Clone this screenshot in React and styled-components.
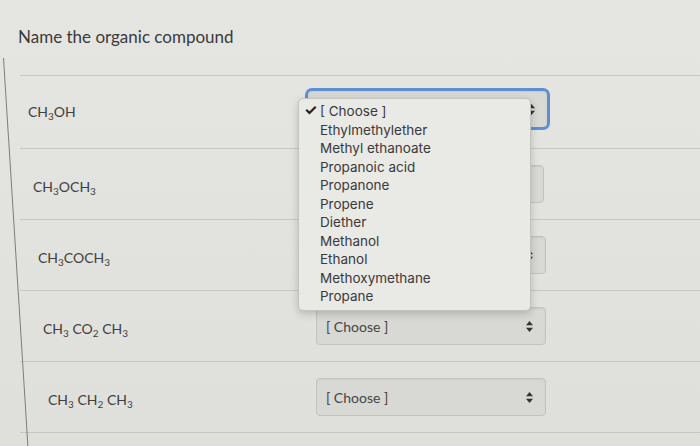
import styled, { createGlobalStyle } from 'styled-components';

const GlobalStyle = createGlobalStyle`
  body {
    margin: 0;
    background: #e1e1de;
    font-family: Lato, "Open Sans", sans-serif;
    color: #3b3b3b;
  }
`;

const options = [
  "Ethylmethylether",
  "Methyl ethanoate",
  "Propanoic acid",
  "Propanone",
  "Propene",
  "Diether",
  "Methanol",
  "Ethanol",
  "Methoxymethane",
  "Propane",
];

const rows = [
  { parts: ["CH", "3", "OH"], indent: 8 },
  { parts: ["CH", "3", "OCH", "3"], indent: 13 },
  { parts: ["CH", "3", "COCH", "3"], indent: 18 },
  { parts: ["CH", "3", " CO", "2", " CH", "3"], indent: 23 },
  { parts: ["CH", "3", " CH", "2", " CH", "3"], indent: 28 },
];

function Arrows() {
  return (
    <svg width="7" height="11" viewBox="0 0 7 11">
      <path d="M3.5 0 L7 4.2 L0 4.2 Z" fill="#333" />
      <path d="M3.5 11 L7 6.8 L0 6.8 Z" fill="#333" />
    </svg>
  );
}

function Formula({ parts }) {
  return (
    <Label>
      {parts.map((p, i) => (i % 2 === 1 ? <sub key={i}>{p}</sub> : <span key={i}>{p}</span>))}
    </Label>
  );
}

function App() {
  return (
    <Page>
      <GlobalStyle />
      <Title>Name the organic compound</Title>
      <List>
        {rows.map((r, i) => (
          <Row key={i} $first={i === 0}>
            <LabelCell $indent={r.indent}>
              <Formula parts={r.parts} />
            </LabelCell>
            <SelectCell>
              <SelectBox $focused={i === 0} $shift={i}>
                <span>{i === 0 ? "" : "[ Choose ]"}</span>
                <Arrows />
              </SelectBox>
              {i === 0 && (
                <Menu>
                  <MenuItem $checked>[ Choose ]</MenuItem>
                  {options.map((o) => (
                    <MenuItem key={o}>{o}</MenuItem>
                  ))}
                </Menu>
              )}
            </SelectCell>
          </Row>
        ))}
      </List>
    </Page>
  );
}

const Page = styled.div`
  position: relative;
  height: 446px;
  overflow: hidden;
  padding: 27px 0 0 18px;
  box-sizing: border-box;
  background: linear-gradient(180deg, #e5e5e2 0%, #dfdfdc 100%);

  &::before {
    content: "";
    position: absolute;
    left: 3px;
    top: 58px;
    height: 388px;
    border-left: 1px solid #7d7d7a;
    transform-origin: top left;
    transform: skewX(3.6deg);
  }
`;

const Title = styled.h1`
  margin: 0 0 28px;
  font-size: 17px;
  font-weight: 400;
  line-height: 20px;
  color: #3a3a3a;
`;

const List = styled.div`
  margin-left: 2px;
`;

const Row = styled.div`
  display: grid;
  grid-template-columns: 288px 242px;
  align-items: center;
  padding: ${(p) => (p.$first ? "12px 0 18px" : "16px 0")};
  border-top: 1px solid #c6c6c2;
  &:last-child {
    border-bottom: 1px solid #c6c6c2;
  }
`;

const LabelCell = styled.div`
  padding-left: ${(p) => p.$indent}px;
  padding-top: 5px;
`;

const Label = styled.span`
  font-size: 14px;
  color: #404040;
  sub {
    font-size: 10px;
    vertical-align: -3px;
  }
`;

const SelectCell = styled.div`
  position: relative;
`;

const SelectBox = styled.div`
  box-sizing: border-box;
  height: ${(p) => (p.$focused ? 42 : 38)}px;
  margin-left: ${(p) => (p.$focused ? -3 : Math.min(p.$shift * 2 + 4, 8))}px;
  width: ${(p) => (p.$focused ? 245 : 230)}px;
  display: flex;
  align-items: center;
  justify-content: space-between;
  padding: 0 12px 0 9px;
  background: #d8d8d4;
  border: ${(p) => (p.$focused ? "3px solid #5f8fd3" : "1px solid #c3c3bf")};
  border-radius: ${(p) => (p.$focused ? 7 : 4)}px;
  box-shadow: inset 0 1px 2px rgba(0, 0, 0, 0.06);
  font-size: 14px;
  color: #454545;
`;

const Menu = styled.div`
  position: absolute;
  left: -10px;
  top: 10px;
  width: 233px;
  box-sizing: border-box;
  padding: 3px 0 4px;
  background: #e9e9e6;
  border: 1px solid #c2c2be;
  border-radius: 5px;
  box-shadow: 0 3px 8px rgba(0, 0, 0, 0.18);
  font-family: Inter, "Liberation Sans", sans-serif;
  z-index: 2;
`;

const MenuItem = styled.div`
  position: relative;
  padding-left: 21px;
  font-size: 13.5px;
  line-height: 18.5px;
  color: #3a3a3a;
  &::before {
    content: ${(p) => (p.$checked ? '"✓"' : "none")};
    position: absolute;
    left: 5px;
    top: -1px;
    font-size: 15px;
    font-weight: 700;
    color: #222;
  }
`;

export default App;
